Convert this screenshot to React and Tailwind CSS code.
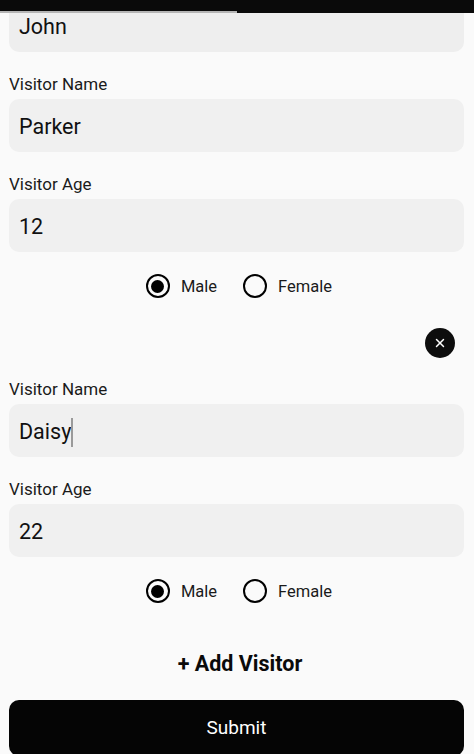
import React from "react";
import { X } from "lucide-react";

function Field({ label, value, caret }) {
  return (
    <div>
      <label className="block h-[47px] pt-[21px] text-[17px] leading-[22px] text-[#1a1a1a]">{label}</label>
      <div className="flex h-[53px] items-center rounded-[10px] bg-[#f0f0f0] px-[10px] pt-[4px] text-[21.5px] text-[#111]">
        <span>{value}</span>
        {caret && <span className="h-[29px] w-[2px] bg-[#9a9a9a]" />}
      </div>
    </div>
  );
}

function Gender() {
  return (
    <div className="flex h-[68px] items-center justify-center gap-[26px] pl-[5px] text-[16.5px] text-[#1a1a1a]">
      <div className="flex items-center gap-[11px]">
        <span className="flex h-6 w-6 items-center justify-center rounded-full border-[2.5px] border-black">
          <span className="h-[13px] w-[13px] rounded-full bg-black" />
        </span>
        <span className="pt-[2px]">Male</span>
      </div>
      <div className="flex items-center gap-[11px]">
        <span className="h-6 w-6 rounded-full border-[2.5px] border-black" />
        <span className="pt-[2px]">Female</span>
      </div>
    </div>
  );
}

export default function App() {
  return (
    <div className="flex h-[754px] flex-col overflow-hidden bg-[#fafafa] font-['Roboto',sans-serif]">
      {/* Status bar + progress line */}
      <div className="flex h-[13px] shrink-0 flex-col justify-end bg-[#0a0a0a]">
        <div className="h-[2px] w-[237px] bg-[#b5b5b5]" />
      </div>

      <div className="pl-[9px] pr-[10px]">
        <div className="flex h-[39px] items-center rounded-b-[10px] bg-[#eeeeee] px-[10px] pb-[10px] text-[21.5px] text-[#111]">
          John
        </div>

        <Field label="Visitor Name" value="Parker" />
        <Field label="Visitor Age" value="12" />
        <Gender />

        <div className="mt-[8px] flex h-[29px] justify-end pr-[9px]">
          <button className="flex h-[30px] w-[30px] items-center justify-center rounded-full bg-[#0d0d0d] text-white">
            <X size={14} strokeWidth={2.5} />
          </button>
        </div>

        <Field label="Visitor Name" value="Daisy" caret />
        <Field label="Visitor Age" value="22" />
        <Gender />

        <div className="flex h-[75px] items-center justify-center pt-[3px] pl-[7px] text-[21.5px] font-bold text-[#0a0a0a]">
          + Add Visitor
        </div>

        <button className="flex h-[56px] w-full items-center justify-center rounded-[10px] bg-[#050505] text-[19px] text-white">
          Submit
        </button>
      </div>
    </div>
  );
}
